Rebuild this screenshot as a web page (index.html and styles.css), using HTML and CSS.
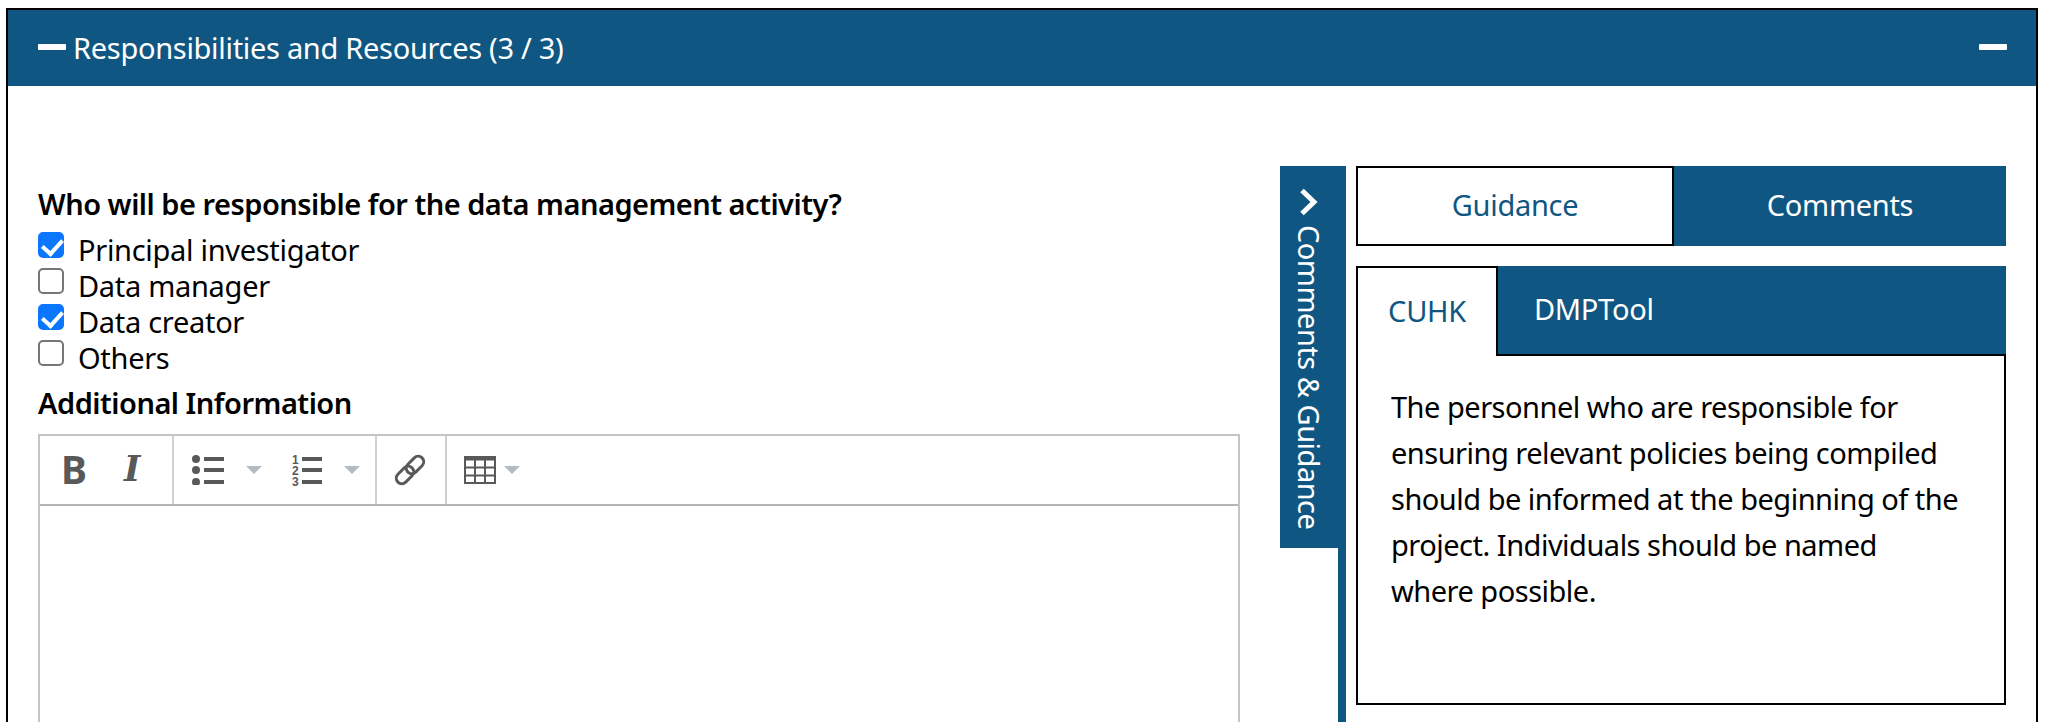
FILE: index.html
```html
<!DOCTYPE html>
<html lang="en">
<head>
  <meta charset="UTF-8" />
  <title>Responsibilities and Resources</title>
  <link rel="stylesheet" href="styles.css">
</head>
<body>
  <div class="panel">
    <div class="panel-heading">
      <span class="minus"></span>
      <span class="panel-title">Responsibilities and Resources (3 / 3)</span>
      <span class="minus"></span>
    </div>

    <div class="panel-body">
      <!-- Question -->
      <div class="question">
        <div class="question-label">Who will be responsible for the data management activity?</div>
        <div class="checks">
          <label class="check"><input type="checkbox" checked /> Principal investigator</label>
          <label class="check"><input type="checkbox" /> Data manager</label>
          <label class="check"><input type="checkbox" checked /> Data creator</label>
          <label class="check"><input type="checkbox" /> Others</label>
        </div>
        <div class="question-label extra-label">Additional Information</div>

        <div class="editor">
          <div class="toolbar">
            <div class="tool-group group-format">
              <span class="tool-b">B</span>
              <span class="tool-i">I</span>
            </div>
            <div class="tool-group group-list">
              <svg class="icon-list" viewBox="0 0 32 30" width="32" height="30">
                <circle cx="4" cy="4" r="4" />
                <circle cx="4" cy="15" r="4" />
                <circle cx="4" cy="27" r="4" />
                <rect x="12" y="2" width="20" height="4" />
                <rect x="12" y="13" width="20" height="4" />
                <rect x="12" y="25" width="20" height="4" />
              </svg>
              <span class="caret"></span>
              <svg class="icon-numlist" viewBox="0 0 30 32" width="30" height="32">
                <text x="0" y="10" class="num">1</text>
                <text x="0" y="21" class="num">2</text>
                <text x="0" y="32" class="num">3</text>
                <rect x="10" y="3" width="20" height="4" />
                <rect x="10" y="14" width="20" height="4" />
                <rect x="10" y="26" width="20" height="4" />
              </svg>
              <span class="caret"></span>
            </div>
            <div class="tool-group group-link">
              <svg viewBox="0 0 32 32" width="32" height="32" fill="none" stroke="#595959" stroke-width="3">
                <rect x="11" y="5.5" width="20" height="11" rx="5.5" transform="rotate(-45 21 11)" />
                <rect x="1" y="15.5" width="20" height="11" rx="5.5" transform="rotate(-45 11 21)" />
              </svg>
            </div>
            <div class="tool-group group-table">
              <svg viewBox="0 0 32 28" width="32" height="28" fill="none" stroke="#595959">
                <rect x="1" y="1" width="30" height="26" stroke-width="2" />
                <path d="M0 2.5H32" stroke-width="4" />
                <path d="M1 11.5H31M1 19.5H31M11 2V27M21 2V27" stroke-width="2" />
              </svg>
              <span class="caret caret-tight"></span>
            </div>
          </div>
        </div>
      </div>

      <!-- Side tab -->
      <div class="side-tab">
        <div class="side-tab-label">
          <svg viewBox="0 0 18 28" width="18" height="28" fill="none" stroke="#fff" stroke-width="5">
            <path d="M2 2.5L14 14L2 25.5" />
          </svg>
          <span class="side-tab-text">Comments &amp; Guidance</span>
        </div>
        <div class="side-tab-rule"></div>
      </div>

      <!-- Guidance column -->
      <div class="guidance">
        <div class="switch">
          <div class="switch-item active">Guidance</div>
          <div class="switch-item">Comments</div>
        </div>
        <div class="tabs">
          <div class="tab active">CUHK</div>
          <div class="tab">DMPTool</div>
        </div>
        <div class="tab-content">
          The personnel who are responsible for ensuring relevant policies being compiled should be informed at the beginning of the project. Individuals should be named where possible.
        </div>
      </div>
    </div>
  </div>
</body>
</html>
```

FILE: styles.css
```css
/* Reset */
* {
  box-sizing: border-box;
}

html, body {
  height: 722px;
  overflow: hidden;
}

body {
  margin: 0;
  padding: 8px 10px 0 6px;
  background: #fff;
  color: #000;
  font-family: "Noto Sans", sans-serif;
  font-size: 29px;
  letter-spacing: -0.3px;
}

/* Panel */
.panel {
  border: 2px solid #000;
  border-bottom: none;
  height: 714px;
  overflow: hidden;
}
.panel-heading {
  display: flex;
  align-items: center;
  height: 76px;
  padding: 0 29px 2px 30px;
  background: #0f5782;
  color: #fff;
}
.panel-title {
  flex: 1;
  margin-left: 7px;
  white-space: nowrap;
}
.minus {
  width: 28px;
  height: 6px;
  background: #fff;
  border-radius: 1px;
}

.panel-body {
  display: flex;
  height: 636px;
  padding: 80px 30px 0 30px;
}

/* Question */
.question {
  width: 1202px;
  padding-top: 20px;
}
.question-label {
  font-weight: 600;
  line-height: 36px;
  letter-spacing: -0.5px;
}
.checks {
  margin-top: 9px;
}
.extra-label {
  margin-top: 10px;
}
.check {
  display: flex;
  align-items: center;
  height: 36px;
  gap: 14px;
}
.check input {
  appearance: none;
  position: relative;
  width: 26px;
  height: 26px;
  margin: 0 0 8px 0;
  border: 2.5px solid #767676;
  border-radius: 5px;
  background: #fff;
}
.check input:checked {
  border-color: #0b76fe;
  background: #0b76fe;
}
.check input:checked::after {
  content: "";
  position: absolute;
  left: 5.5px;
  top: 0.5px;
  width: 9px;
  height: 16px;
  border-right: 4px solid #fff;
  border-bottom: 4px solid #fff;
  transform: rotate(42deg);
}

/* Editor */
.editor {
  height: 500px;
  margin-top: 13px;
  border: 2px solid #c4c4c4;
}
.toolbar {
  display: flex;
  height: 70px;
  border-bottom: 2px solid #b5b5b5;
  color: #595959;
}
.tool-group {
  display: flex;
  align-items: center;
  height: 68px;
  border-right: 2px solid #d0d0d0;
}
.group-format {
  width: 134px;
  padding: 0 0 4px 21px;
  letter-spacing: 0;
}
.tool-b {
  font-weight: 700;
  font-size: 39px;
}
.tool-i {
  margin-left: 37px;
  font-family: "DejaVu Serif", serif;
  font-style: italic;
  font-weight: 700;
  font-size: 35px;
}
.group-list {
  width: 203px;
  padding-left: 18px;
}
.icon-list, .icon-numlist {
  fill: #595959;
}
.icon-numlist {
  margin-left: 30px;
}
.num {
  font-family: "Liberation Sans", sans-serif;
  font-size: 12px;
  font-weight: 700;
  letter-spacing: 0;
}
.caret {
  width: 0;
  height: 0;
  margin-left: 22px;
  border-left: 8px solid transparent;
  border-right: 8px solid transparent;
  border-top: 8px solid #b4bbc1;
}
.caret-tight {
  margin-left: 8px;
}
.group-link {
  width: 70px;
  padding-left: 17px;
}
.group-table {
  padding-left: 17px;
  border-right: none;
}

/* Side tab */
.side-tab {
  display: flex;
  flex-direction: column;
  align-items: flex-end;
  width: 66px;
  margin-left: 40px;
}
.side-tab-label {
  display: flex;
  flex-direction: column;
  align-items: center;
  width: 66px;
  height: 382px;
  padding: 22px 8px 0 0;
  background: #0f5782;
  color: #fff;
}
.side-tab-text {
  margin-top: 9px;
  writing-mode: vertical-rl;
  white-space: nowrap;
  letter-spacing: -0.5px;
}
.side-tab-rule {
  flex: 1;
  width: 8px;
  background: #0f5782;
}

/* Guidance */
.guidance {
  width: 650px;
  margin-left: 10px;
}
.switch {
  display: flex;
  height: 80px;
  margin-bottom: 20px;
  background: #0f5782;
  color: #fff;
}
.switch-item {
  display: flex;
  align-items: center;
  justify-content: center;
  width: 332px;
  padding-bottom: 4px;
}
.switch-item.active {
  width: 318px;
  background: #fff;
  color: #0f5782;
  border: 2px solid #000;
}
.tabs {
  display: flex;
  height: 90px;
  background: #0f5782;
  color: #fff;
  border-bottom: 2px solid #000;
}
.tab {
  display: flex;
  align-items: center;
  justify-content: center;
  height: 88px;
  padding: 0 36px 4px 36px;
}
.tab.active {
  width: 142px;
  height: 90px;
  padding: 0 0 4px 0;
  background: #fff;
  color: #0f5782;
  border: 2px solid #000;
  border-bottom: none;
}
.tab-content {
  height: 349px;
  padding: 28px 42px 0 33px;
  border: 2px solid #000;
  border-top: none;
  line-height: 46px;
  letter-spacing: -0.5px;
}
```
